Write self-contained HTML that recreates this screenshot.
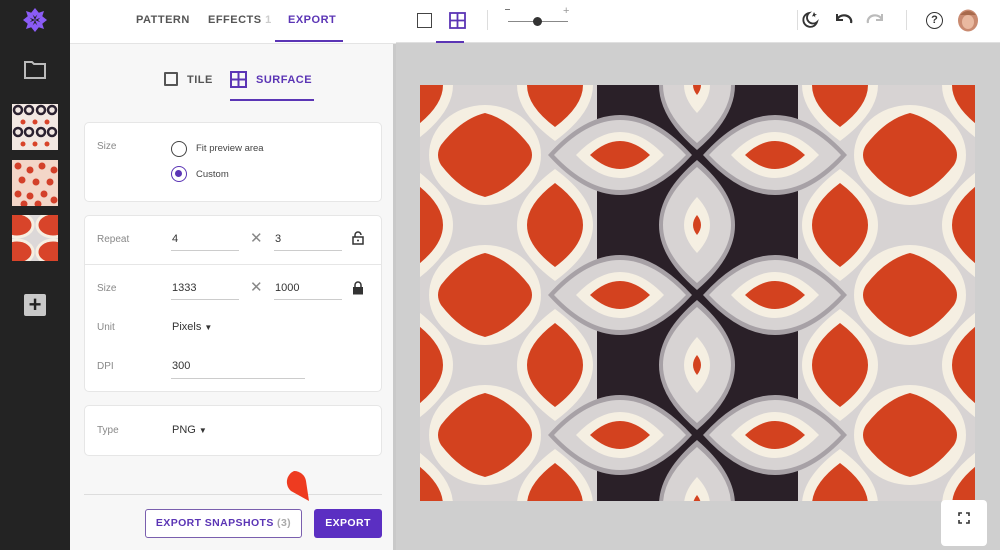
<!DOCTYPE html>
<html><head><meta charset="utf-8"><style>
*{margin:0;padding:0;box-sizing:border-box}
html,body{width:1000px;height:550px;overflow:hidden}
body{font-family:"Liberation Sans",sans-serif;position:relative;background:#cfcfcf}
.abs{position:absolute}
.side{left:0;top:0;width:70px;height:550px;background:#232323}
.panel{left:70px;top:0;width:326px;height:550px;background:#f7f7f7;border-right:3px solid #c9c9c9}
.ph{left:70px;top:0;width:326px;height:44px;background:#fff;border-bottom:1px solid #e4e4e4}
.tab{font-size:11px;font-weight:bold;letter-spacing:.5px;color:#555;top:14px}
.card{background:#fff;border:1px solid #e6e6e6;border-radius:5px;left:84px;width:298px}
.lbl{font-size:10px;color:#888}
.val{font-size:11px;color:#333}
.inp{border-bottom:1px solid #ccc}
.tb{left:396px;top:0;width:604px;height:43px;background:#fff;border-bottom:1px solid #e0e0e0}
</style></head><body>
<div class="abs side"></div>
<svg class="abs" style="left:22px;top:7px" width="26" height="26" viewBox="0 0 26 26"><g fill="#8b5cf6"><path d="M13 1 L17 6 L13 10 L9 6Z"/><path d="M13 25 L17 20 L13 16 L9 20Z"/><path d="M1 13 L6 9 L10 13 L6 17Z"/><path d="M25 13 L20 9 L16 13 L20 17Z"/><path d="M4 4 L10 6 L13 13 L6 10Z"/><path d="M22 4 L16 6 L13 13 L20 10Z"/><path d="M4 22 L10 20 L13 13 L6 16Z"/><path d="M22 22 L16 20 L13 13 L20 16Z"/></g></svg>
<svg class="abs" style="left:23px;top:60px" width="24" height="20" viewBox="0 0 24 20"><path d="M2 2h7l2 2h11v14H2z" fill="none" stroke="#bbb" stroke-width="2"/></svg>
<svg class="abs" style="left:12px;top:104px" width="46" height="46"><rect width="46" height="46" fill="#f2e8e2"/><g fill="none" stroke="#2b2230" stroke-width="2.5"><circle cx="6" cy="6" r="4"/><circle cx="17" cy="6" r="4"/><circle cx="29" cy="6" r="4"/><circle cx="40" cy="6" r="4"/><circle cx="6" cy="28" r="4"/><circle cx="17" cy="28" r="4"/><circle cx="29" cy="28" r="4"/><circle cx="40" cy="28" r="4"/></g><g fill="#d8442a"><circle cx="11" cy="18" r="2.5"/><circle cx="23" cy="18" r="2.5"/><circle cx="35" cy="18" r="2.5"/><circle cx="11" cy="40" r="2.5"/><circle cx="23" cy="40" r="2.5"/><circle cx="35" cy="40" r="2.5"/></g></svg>
<svg class="abs" style="left:12px;top:160px" width="46" height="46"><rect width="46" height="46" fill="#f3d6c8"/><g fill="#d3402a"><circle cx="6" cy="6" r="3.5"/><circle cx="18" cy="10" r="3.5"/><circle cx="30" cy="6" r="3.5"/><circle cx="42" cy="10" r="3.5"/><circle cx="10" cy="20" r="3.5"/><circle cx="24" cy="22" r="3.5"/><circle cx="38" cy="22" r="3.5"/><circle cx="6" cy="34" r="3.5"/><circle cx="18" cy="36" r="3.5"/><circle cx="32" cy="34" r="3.5"/><circle cx="42" cy="40" r="3.5"/><circle cx="12" cy="44" r="3.5"/><circle cx="26" cy="44" r="3.5"/></g></svg>
<svg class="abs" style="left:12px;top:215px" width="46" height="46"><rect width="46" height="46" fill="#dcd8d8"/><g fill="#d8442a" stroke="#f6efe2" stroke-width="3"><ellipse cx="5" cy="10" rx="16" ry="12"/><ellipse cx="41" cy="10" rx="16" ry="12"/><ellipse cx="5" cy="37" rx="16" ry="12"/><ellipse cx="41" cy="37" rx="16" ry="12"/></g></svg>
<div class="abs" style="left:24px;top:294px;width:22px;height:22px;background:#c8c8c8;border-radius:2px;color:#222;font-size:22px;line-height:21px;text-align:center;font-weight:bold">+</div>

<div class="abs panel"></div>
<div class="abs ph"></div>
<div class="abs tab" style="left:136px">PATTERN</div>
<div class="abs tab" style="left:208px">EFFECTS <span style="color:#ccc">1</span></div>
<div class="abs tab" style="left:288px;color:#5b35b5">EXPORT</div>
<div class="abs" style="left:275px;top:40px;width:68px;height:2px;background:#5b35b5"></div>
<div class="abs" style="left:164px;top:72px;width:14px;height:14px;border:2px solid #555;border-radius:1px"></div>
<div class="abs tab" style="left:187px;top:74px;color:#555">TILE</div>
<svg class="abs" style="left:230px;top:71px" width="17" height="17"><rect x="1" y="1" width="15" height="15" fill="none" stroke="#5b35b5" stroke-width="2"/><path d="M8.5 1v15M1 8.5h15" stroke="#5b35b5" stroke-width="2"/></svg>
<div class="abs tab" style="left:256px;top:74px;color:#5b35b5">SURFACE</div>
<div class="abs" style="left:230px;top:99px;width:84px;height:2px;background:#5b35b5"></div>

<div class="abs card" style="top:122px;height:80px"></div>
<div class="abs lbl" style="left:97px;top:141px">Size</div>
<div class="abs" style="left:171px;top:141px;width:16px;height:16px;border:1.5px solid #444;border-radius:50%"></div>
<div class="abs lbl" style="left:196px;top:143px;color:#444;font-size:9.5px">Fit preview area</div>
<div class="abs" style="left:171px;top:166px;width:16px;height:16px;border:1.5px solid #5b35b5;border-radius:50%"><div style="margin:3px;width:7px;height:7px;border-radius:50%;background:#5b35b5"></div></div>
<div class="abs lbl" style="left:196px;top:169px;color:#444;font-size:9.5px">Custom</div>

<div class="abs card" style="top:215px;height:177px"></div>
<div class="abs" style="left:85px;top:264px;width:296px;height:1px;background:#e6e6e6"></div>
<div class="abs lbl" style="left:97px;top:234px">Repeat</div>
<div class="abs val" style="left:172px;top:233px">4</div><div class="abs inp" style="left:171px;top:250px;width:68px"></div>
<div class="abs" style="left:250px;top:229px;color:#888;font-size:15px">✕</div>
<div class="abs val" style="left:275px;top:233px">3</div><div class="abs inp" style="left:274px;top:250px;width:68px"></div>
<svg class="abs" style="left:352px;top:231px" width="12" height="14"><rect x="1" y="6" width="10" height="7" fill="none" stroke="#333" stroke-width="1.5"/><path d="M3 6V4a3 3 0 016 0" fill="none" stroke="#333" stroke-width="1.5"/><circle cx="6" cy="9.5" r="1" fill="#333"/></svg>
<div class="abs lbl" style="left:97px;top:283px">Size</div>
<div class="abs val" style="left:172px;top:282px">1333</div><div class="abs inp" style="left:171px;top:299px;width:68px"></div>
<div class="abs" style="left:250px;top:278px;color:#888;font-size:15px">✕</div>
<div class="abs val" style="left:275px;top:282px">1000</div><div class="abs inp" style="left:274px;top:299px;width:68px"></div>
<svg class="abs" style="left:352px;top:281px" width="12" height="14"><rect x="1" y="6" width="10" height="7.5" fill="#333"/><path d="M3 6V4a3 3 0 016 0v2" fill="none" stroke="#333" stroke-width="1.5"/></svg>
<div class="abs lbl" style="left:97px;top:322px">Unit</div>
<div class="abs val" style="left:172px;top:321px">Pixels <span style="font-size:8px">▼</span></div>
<div class="abs lbl" style="left:97px;top:361px">DPI</div>
<div class="abs val" style="left:172px;top:360px">300</div><div class="abs inp" style="left:171px;top:378px;width:134px"></div>

<div class="abs card" style="top:405px;height:51px"></div>
<div class="abs lbl" style="left:97px;top:425px">Type</div>
<div class="abs val" style="left:172px;top:424px">PNG <span style="font-size:8px">▼</span></div>
<div class="abs" style="left:84px;top:494px;width:298px;height:1px;background:#ddd"></div>
<svg class="abs" style="left:280px;top:469px" width="32" height="34"><path d="M14 2a12 12 0 0112 10l3 20-18-10A12 12 0 0114 2z" fill="#ee3b20"/></svg>
<div class="abs" style="left:145px;top:509px;width:157px;height:29px;border:1.5px solid #7a5fae;border-radius:3px;background:#fff;color:#5b35b5;font-size:10.5px;font-weight:bold;text-align:center;line-height:26px;letter-spacing:.4px">EXPORT SNAPSHOTS <span style="color:#aaa">(3)</span></div>
<div class="abs" style="left:314px;top:509px;width:68px;height:29px;border-radius:3px;background:#5b2fc2;color:#fff;font-size:10.5px;font-weight:bold;text-align:center;line-height:29px;letter-spacing:.4px">EXPORT</div>

<div class="abs tb"></div>
<div class="abs" style="left:417px;top:13px;width:15px;height:15px;border:1.5px solid #444"></div>
<svg class="abs" style="left:449px;top:12px" width="17" height="17"><rect x="1" y="1" width="15" height="15" fill="none" stroke="#5b35b5" stroke-width="1.8"/><path d="M8.5 1v15M1 8.5h15" stroke="#5b35b5" stroke-width="1.8"/></svg>
<div class="abs" style="left:436px;top:41px;width:28px;height:2px;background:#5b35b5"></div>
<div class="abs" style="left:487px;top:10px;width:1px;height:20px;background:#ddd"></div>
<div class="abs" style="left:505px;top:9px;width:5px;height:1px;background:#777"></div>
<div class="abs" style="left:563px;top:5px;color:#999;font-size:11px">+</div>
<div class="abs" style="left:508px;top:21px;width:60px;height:1px;background:#888"></div>
<div class="abs" style="left:533px;top:17px;width:9px;height:9px;border-radius:50%;background:#333"></div>
<div class="abs" style="left:797px;top:10px;width:1px;height:20px;background:#ddd"></div>
<svg class="abs" style="left:800px;top:10px" width="20" height="20"><path d="M9 3a7 7 0 108 9 6 6 0 01-8-9z" fill="none" stroke="#333" stroke-width="1.8"/><path d="M14 2l1 2 2 .5-2 1 .3 2-1.3-1.5-2 .5 1-2z" fill="#333"/></svg>
<svg class="abs" style="left:833px;top:11px" width="20" height="16"><path d="M4 3v6h6" fill="none" stroke="#333" stroke-width="2"/><path d="M4 9a7 6 0 0114 3" fill="none" stroke="#333" stroke-width="2.2"/></svg>
<svg class="abs" style="left:866px;top:11px" width="20" height="16"><path d="M16 3v6h-6" fill="none" stroke="#bbb" stroke-width="2"/><path d="M16 9a7 6 0 00-14 3" fill="none" stroke="#bbb" stroke-width="2.2"/></svg>
<div class="abs" style="left:906px;top:10px;width:1px;height:20px;background:#ddd"></div>
<div class="abs" style="left:926px;top:12px;width:17px;height:17px;border:1.8px solid #333;border-radius:50%;font-size:11px;font-weight:bold;text-align:center;line-height:14px;color:#333">?</div>
<svg class="abs" style="left:957px;top:9px" width="22" height="23"><ellipse cx="11" cy="11.5" rx="10" ry="11" fill="#c98a70"/><ellipse cx="11" cy="13" rx="6" ry="7" fill="#e9b9a0"/><path d="M3 6q8-8 16 0" fill="#a86a4c"/></svg>

<svg class="abs" style="left:420px;top:85px" width="555" height="416" viewBox="0 0 555 416">
<defs>
<clipPath id="c"><rect width="555" height="416"/></clipPath>
<g id="vl">
  <path d="M0 -56 Q76 0 0 56 Q-76 0 0 -56Z" fill="#f5efe2"/>
  <path d="M0 -42 Q56 0 0 42 Q-56 0 0 -42Z" fill="#d3421f"/>
</g>
<g id="hl">
  <path d="M-72 0 Q0 -80 72 0 Q0 80 -72 0Z" fill="#a7a1a6"/>
  <path d="M-66 0 Q0 -70 66 0 Q0 70 -66 0Z" fill="#d7d3d3"/>
  <path d="M-44 0 Q0 -46 44 0 Q0 46 -44 0Z" fill="#f5efe2"/>
  <path d="M-30 0 Q0 -28 30 0 Q0 28 -30 0Z" fill="#d3421f"/>
</g>
<g id="bo">
  <ellipse cx="0" cy="0" rx="56" ry="50" fill="#f5efe2"/>
  <path d="M0 -42 Q24 -36 44 -10 Q50 0 44 10 Q24 36 0 42 Q-24 36 -44 10 Q-50 0 -44 -10 Q-24 -36 0 -42Z" fill="#d3421f"/>
</g>
<g id="cl">
 <path d="M277 5 Q353 70 277 135 Q201 70 277 5Z" fill="#a7a1a6"/>
 <path d="M277 12 Q345 70 277 128 Q209 70 277 12Z" fill="#d7d3d3"/>
 <path d="M277 42 Q303 70 277 98 Q251 70 277 42Z" fill="#f5efe2"/>
 <path d="M277 60 Q285 70 277 80 Q269 70 277 60Z" fill="#d3421f"/>
</g>
</defs>
<g clip-path="url(#c)">
<rect width="555" height="416" fill="#d7d3d3"/>
<rect x="177" y="-10" width="201" height="440" fill="#2a2028"/>
<g id="left">
 <use href="#hl" x="200" y="70"/><use href="#hl" x="200" y="210"/><use href="#hl" x="200" y="350"/>
 <use href="#bo" x="65" y="70"/><use href="#bo" x="65" y="210"/><use href="#bo" x="65" y="350"/>
 <use href="#vl" x="135" y="0"/><use href="#vl" x="135" y="140"/><use href="#vl" x="135" y="280"/><use href="#vl" x="135" y="420"/>
 <use href="#vl" x="-5" y="0"/><use href="#vl" x="-5" y="140"/><use href="#vl" x="-5" y="280"/><use href="#vl" x="-5" y="420"/>
</g>
<use href="#left" transform="translate(555 0) scale(-1 1)"/>
<use href="#cl" y="-70"/><use href="#cl" y="70"/><use href="#cl" y="210"/><use href="#cl" y="350"/>
</g>
</svg>

<div class="abs" style="left:941px;top:500px;width:46px;height:46px;background:#fff;border-radius:4px"></div>
<svg class="abs" style="left:958px;top:512px" width="12" height="12"><path d="M1 4V1h3M8 1h3v3M11 8v3H8M4 11H1V8" fill="none" stroke="#333" stroke-width="1.6"/></svg>
</body></html>
